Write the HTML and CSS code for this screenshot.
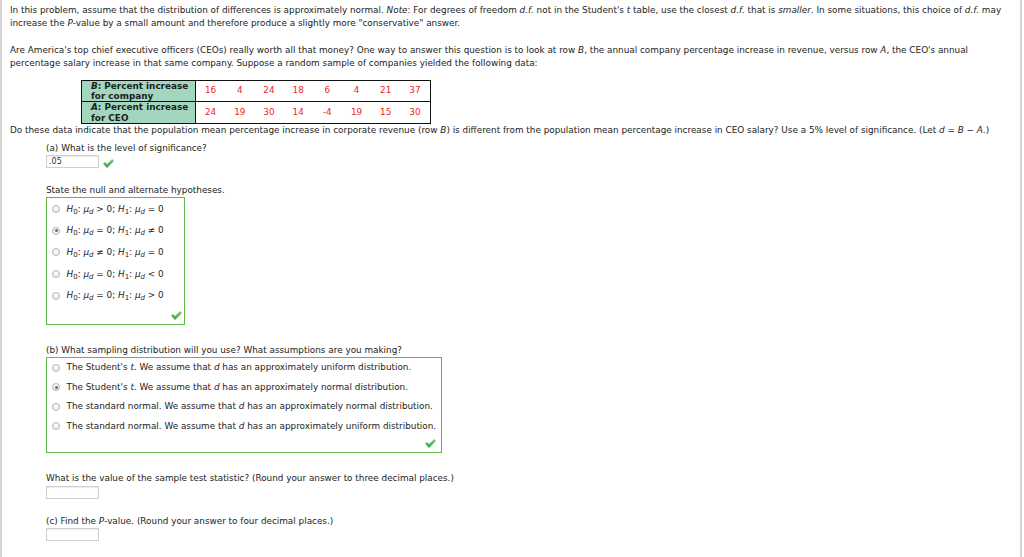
FILE: index.html
```html
<!DOCTYPE html>
<html>
<head>
<meta charset="utf-8">
<link rel="stylesheet" href="styles.css">
</head>
<body>
<div class="page">
  <p class="intro">In this problem, assume that the distribution of differences is approximately normal. <i>Note</i>: For degrees of freedom <i>d.f.</i> not in the Student's <i>t</i> table, use the closest <i>d.f.</i> that is <i>smaller</i>. In some situations, this choice of <i>d.f.</i> may increase the <i>P</i>-value by a small amount and therefore produce a slightly more "conservative" answer.</p>
  <p class="intro">Are America's top chief executive officers (CEOs) really worth all that money? One way to answer this question is to look at row <i>B</i>, the annual company percentage increase in revenue, versus row <i>A</i>, the CEO's annual percentage salary increase in that same company. Suppose a random sample of companies yielded the following data:</p>
  <table class="data">
    <tr>
      <th><i>B</i>: Percent increase<br>for company</th>
      <td>16</td><td>4</td><td>24</td><td>18</td><td>6</td><td>4</td><td>21</td><td>37</td>
    </tr>
    <tr>
      <th><i>A</i>: Percent increase<br>for CEO</th>
      <td>24</td><td>19</td><td>30</td><td>14</td><td>-4</td><td>19</td><td>15</td><td>30</td>
    </tr>
  </table>
  <p class="question">Do these data indicate that the population mean percentage increase in corporate revenue (row <i>B</i>) is different from the population mean percentage increase in CEO salary? Use a 5% level of significance. (Let <i>d</i> = <i>B</i> &minus; <i>A</i>.)</p>
  <div class="part">
    <p class="label-a">(a) What is the level of significance?</p>
    <div class="answer">
      <span class="field">.05</span>
      <svg class="check" width="11" height="9" viewBox="0 0 11 9"><defs><linearGradient id="g1" x1="0" y1="0" x2="0" y2="1"><stop offset="0" stop-color="#7fd07f"/><stop offset="1" stop-color="#3f9f3f"/></linearGradient></defs><polygon points="0,4.8 1.9,3 4,5.1 9.1,0 11,1.9 4,8.9" fill="url(#g1)"/></svg>
    </div>
    <p class="label-hyp">State the null and alternate hypotheses.</p>
    <div class="choices hyp">
      <div class="opt"><span class="radio"></span><span><i>H</i><sub>0</sub>: <i>&mu;<sub>d</sub></i> &gt; 0; <i>H</i><sub>1</sub>: <i>&mu;<sub>d</sub></i> = 0</span></div>
      <div class="opt"><span class="radio on"></span><span><i>H</i><sub>0</sub>: <i>&mu;<sub>d</sub></i> = 0; <i>H</i><sub>1</sub>: <i>&mu;<sub>d</sub></i> &ne; 0</span></div>
      <div class="opt"><span class="radio"></span><span><i>H</i><sub>0</sub>: <i>&mu;<sub>d</sub></i> &ne; 0; <i>H</i><sub>1</sub>: <i>&mu;<sub>d</sub></i> = 0</span></div>
      <div class="opt"><span class="radio"></span><span><i>H</i><sub>0</sub>: <i>&mu;<sub>d</sub></i> = 0; <i>H</i><sub>1</sub>: <i>&mu;<sub>d</sub></i> &lt; 0</span></div>
      <div class="opt"><span class="radio"></span><span><i>H</i><sub>0</sub>: <i>&mu;<sub>d</sub></i> = 0; <i>H</i><sub>1</sub>: <i>&mu;<sub>d</sub></i> &gt; 0</span></div>
      <div class="check-row"><svg class="check" width="11" height="9" viewBox="0 0 11 9"><defs><linearGradient id="g2" x1="0" y1="0" x2="0" y2="1"><stop offset="0" stop-color="#7fd07f"/><stop offset="1" stop-color="#3f9f3f"/></linearGradient></defs><polygon points="0,4.8 1.9,3 4,5.1 9.1,0 11,1.9 4,8.9" fill="url(#g2)"/></svg></div>
    </div>
    <p class="label-b">(b) What sampling distribution will you use? What assumptions are you making?</p>
    <div class="choices dist">
      <div class="opt"><span class="radio"></span><span>The Student's <i>t</i>. We assume that <i>d</i> has an approximately uniform distribution.</span></div>
      <div class="opt"><span class="radio on"></span><span>The Student's <i>t</i>. We assume that <i>d</i> has an approximately normal distribution.</span></div>
      <div class="opt"><span class="radio"></span><span>The standard normal. We assume that <i>d</i> has an approximately normal distribution.</span></div>
      <div class="opt"><span class="radio"></span><span>The standard normal. We assume that <i>d</i> has an approximately uniform distribution.</span></div>
      <div class="check-row"><svg class="check" width="11" height="9" viewBox="0 0 11 9"><defs><linearGradient id="g3" x1="0" y1="0" x2="0" y2="1"><stop offset="0" stop-color="#7fd07f"/><stop offset="1" stop-color="#3f9f3f"/></linearGradient></defs><polygon points="0,4.8 1.9,3 4,5.1 9.1,0 11,1.9 4,8.9" fill="url(#g3)"/></svg></div>
    </div>
    <p class="label-stat">What is the value of the sample test statistic? (Round your answer to three decimal places.)</p>
    <div class="answer"><span class="field"></span></div>
    <p class="label-c">(c) Find the <i>P</i>-value. (Round your answer to four decimal places.)</p>
    <div class="answer"><span class="field"></span></div>
  </div>
</div>
</body>
</html>
```

FILE: styles.css
```css
html, body {
  margin: 0;
  padding: 0;
  background: #ffffff;
}

.page {
  box-sizing: border-box;
  width: 1022px;
  height: 557px;
  border-left: 2px solid #d6d6d6;
  border-right: 2px solid #d6d6d6;
  padding: 4px 8px 0 8px;
  font-family: "DejaVu Sans", "Liberation Sans", sans-serif;
  font-size: 8.86px;
  line-height: 13px;
  color: #1c1c1c;
  overflow: hidden;
}

p {
  margin: 0;
}

.intro + .intro {
  margin-top: 13.5px;
}

.data {
  margin: 10px 0 0 71px;
  border-collapse: collapse;
  border: 1px solid #111;
}

.data th {
  background: #a2d6bf;
  font-weight: bold;
  text-align: left;
  line-height: 10.4px;
  padding: 0 0 0 9px;
  width: 104px;
  border-right: 1px solid #111;
  border-bottom: 1px solid #111;
  color: #1c1c1c;
  white-space: nowrap;
}

.data td {
  width: 29.2px;
  padding: 0;
  text-align: center;
  color: #ee1c1c;
  border-bottom: 1px solid #111;
}

.part {
  padding-left: 36px;
}

.label-a {
  margin-top: 5.3px;
}

.answer {
  display: flex;
  align-items: center;
  gap: 4px;
}

.field {
  box-sizing: border-box;
  display: block;
  width: 53px;
  height: 13px;
  border: 1px solid #cfcfcf;
  box-shadow: inset 0 1px 1px #ececec;
  font-size: 8px;
  line-height: 11px;
  padding-left: 2px;
  color: #333;
}

.answer .check {
  margin-top: 3px;
}

.label-hyp {
  margin-top: 16px;
}

.choices {
  box-sizing: border-box;
  border: 1px solid #62b94a;
}

.hyp {
  width: 139px;
}

.dist {
  width: 396px;
}

.opt {
  display: flex;
  align-items: center;
  padding-left: 5px;
  white-space: nowrap;
}

.hyp .opt {
  height: 21.6px;
}

.dist .opt {
  height: 19.4px;
}

.radio {
  box-sizing: border-box;
  flex: none;
  width: 8px;
  height: 8px;
  border-radius: 50%;
  border: 1px solid #b4b4b4;
  background: radial-gradient(circle at 50% 35%, #ffffff 0%, #e2e2e2 100%);
  margin-right: 6.5px;
  position: relative;
}

.radio.on::after {
  content: "";
  position: absolute;
  left: 1.5px;
  top: 1.5px;
  width: 3px;
  height: 3px;
  border-radius: 50%;
  background: #6a6a6a;
}

sub {
  font-size: 7px;
  line-height: 0;
  vertical-align: -1.5px;
}

.check-row {
  display: flex;
  justify-content: flex-end;
  align-items: center;
}

.hyp .check-row {
  height: 17.6px;
  padding-right: 2px;
}

.dist .check-row {
  height: 16.2px;
  padding-right: 5px;
}

.label-b {
  margin-top: 19.2px;
}

.label-stat {
  margin-top: 19.5px;
  margin-bottom: 1px;
}

.label-c {
  margin-top: 16px;
}
```
